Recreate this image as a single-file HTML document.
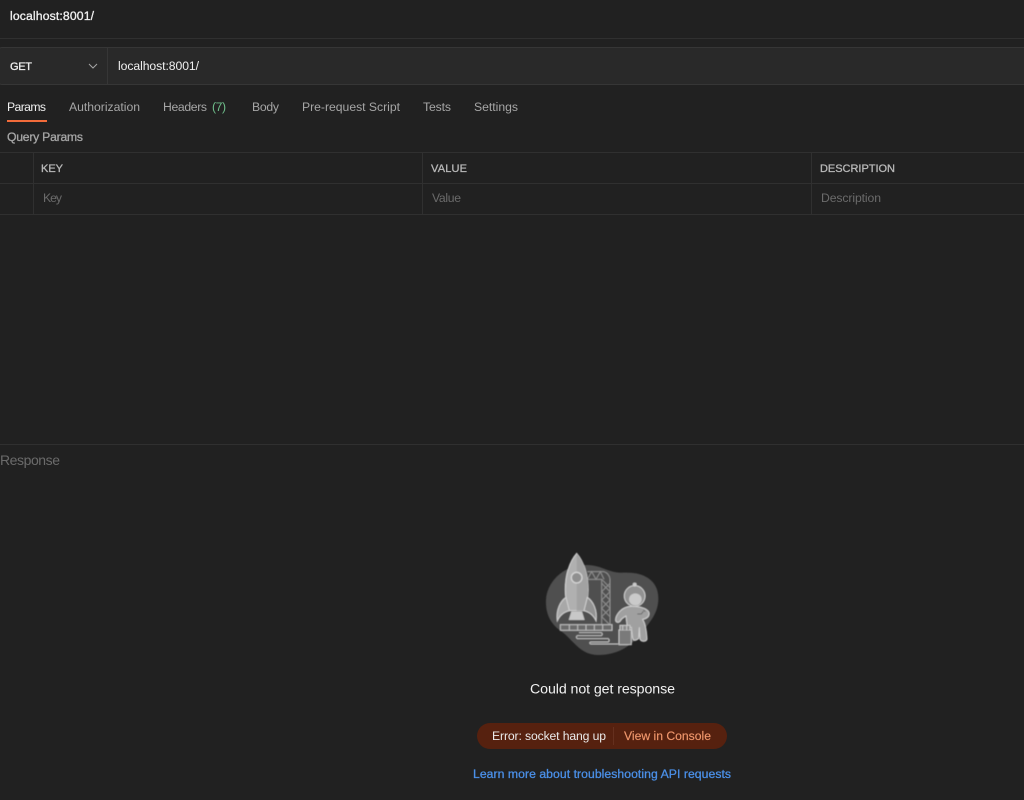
<!DOCTYPE html>
<html><head><meta charset="utf-8"><style>
html,body{margin:0;padding:0;background:#212121;width:1024px;height:800px;overflow:hidden}
svg{display:block}
text{font-family:"Liberation Sans",sans-serif;font-size:12.2px;fill:#a6a6a6}
.b{stroke-width:.3px;paint-order:stroke}
.u{font-size:11px}
</style></head><body>
<svg width="1024" height="800" viewBox="0 0 1024 800" xmlns="http://www.w3.org/2000/svg">
<defs><filter id="s" x="-5%" y="-5%" width="110%" height="110%"><feGaussianBlur stdDeviation="1.5"/></filter></defs>
<rect width="1024" height="800" fill="#212121"/>
<text x="10" y="20" textLength="84" class="b" style="fill:#f2f2f2;stroke:#f2f2f2">localhost:8001/</text>
<rect x="0" y="38" width="1024" height="1" fill="#303030"/>
<rect x="-2" y="47.5" width="1030" height="37" rx="4" fill="#292929" stroke="#363636"/>
<rect x="107" y="48" width="1" height="36" fill="#363636"/>
<text x="10" y="70" textLength="22" class="b u" style="fill:#f0f0f0;stroke:#f0f0f0">GET</text>
<path d="M89 64l4 4 4-4" fill="none" stroke="#a6a6a6" stroke-width="1"/>
<text x="118" y="70" textLength="81" style="fill:#f0f0f0">localhost:8001/</text>
<text x="7" y="111" textLength="39" style="fill:#f0f0f0">Params</text>
<text x="69" y="111" textLength="71">Authorization</text>
<text x="163" y="111" textLength="44">Headers</text>
<text x="212" y="111" textLength="14" style="fill:#6fbf8b">(7)</text>
<text x="252" y="111" textLength="27">Body</text>
<text x="302" y="111" textLength="98">Pre-request Script</text>
<text x="423" y="111" textLength="28">Tests</text>
<text x="474" y="111" textLength="44">Settings</text>
<rect x="7" y="120" width="40" height="2" fill="#f26b3a"/>
<text x="7" y="141" textLength="76" class="b" style="fill:#a6a6a6;stroke:#a6a6a6">Query Params</text>
<g fill="#303030">
<rect x="0" y="152" width="1024" height="1"/>
<rect x="0" y="183" width="1024" height="1"/>
<rect x="0" y="214" width="1024" height="1"/>
<rect x="33" y="152" width="1" height="62"/>
<rect x="422" y="152" width="1" height="62"/>
<rect x="811" y="152" width="1" height="62"/>
<rect x="0" y="444" width="1024" height="1"/>
</g>
<text x="41" y="172" textLength="22" class="b u" style="fill:#b8b8b8;stroke:#b8b8b8">KEY</text>
<text x="431" y="172" textLength="36" class="b u" style="fill:#b8b8b8;stroke:#b8b8b8">VALUE</text>
<text x="820" y="172" textLength="75" class="b u" style="fill:#b8b8b8;stroke:#b8b8b8">DESCRIPTION</text>
<text x="43" y="202" textLength="19" style="fill:#6b6b6b">Key</text>
<text x="432" y="202" textLength="29" style="fill:#6b6b6b">Value</text>
<text x="821" y="202" textLength="60" style="fill:#6b6b6b">Description</text>
<text x="0" y="465" textLength="60" style="fill:#6b6b6b;font-size:14px">Response</text>

<svg x="530" y="540" width="140" height="125" viewBox="0 0 420 375">
<g filter="url(#s)">
<path d="M48 180C50 130 95 75 170 75C215 75 235 100 280 98C340 95 385 120 385 175C385 215 365 240 345 265C320 300 280 345 205 345C150 345 130 300 95 275C65 255 46 225 48 180Z" fill="#505050"/>
<g fill="none" stroke="#8f8f8f" stroke-width="3">
<path d="M172 95H222Q238 100 240 118V258M172 118H215V258"/>
<path d="M172 118L185 95L198 118L211 95L222 118M215 130L240 155L215 180L240 205L215 230L240 255M240 130L215 155L240 180L215 205L240 230M215 118L240 143"/>
</g>
<path d="M140 40C118 65 106 105 106 150C106 175 111 195 118 212H162C169 195 174 175 174 150C174 105 162 65 140 40Z" fill="#b0b0b0" stroke="#d4d4d4" stroke-width="3"/>
<path d="M140 40C162 65 174 105 174 150C174 175 169 195 162 212H140Z" fill="#a2a2a2"/>
<circle cx="140" cy="113" r="16" fill="#8f8f8f" stroke="#d4d4d4" stroke-width="4"/>
<path d="M108 172C90 185 78 210 82 242C90 225 102 216 118 212Z" fill="#a8a8a8" stroke="#d0d0d0" stroke-width="3"/>
<path d="M172 172C190 185 202 210 198 242C190 225 178 216 162 212Z" fill="#939393" stroke="#d0d0d0" stroke-width="3"/>
<path d="M124 214H156L164 240H116Z" fill="#c8c8c8"/>
<g fill="none" stroke="#c0c0c0" stroke-width="3">
<rect x="91" y="254" width="155" height="17" fill="#6a6a6a"/>
<path d="M118 254V271M143 254V271M168 254V271M193 254V271M218 254V271"/>
<path d="M147 278H214Q220 282 214 287H142Q136 291 142 296H235Q240 301 235 306H182Q176 309 182 312H265"/>
</g>
<path d="M285 203C270 210 258 225 257 238C256 246 264 250 270 244C274 236 280 232 288 228L292 262H304L308 295C312 306 320 300 326 296L328 262L330 298C334 306 348 306 351 298C350 270 345 250 338 238C348 236 358 232 357 220C356 208 335 200 312 199C302 198 292 200 285 203Z" fill="#a0a0a0" stroke="#d0d0d0" stroke-width="3"/>
<circle cx="314" cy="168" r="31" fill="#929292" stroke="#d0d0d0" stroke-width="3"/>
<ellipse cx="316" cy="178" rx="19" ry="18" fill="#cacaca"/>
<circle cx="314" cy="134" r="6" fill="#cacaca"/>
<path d="M322 222l12 0 6-8M340 210l6 5" fill="none" stroke="#6a6a6a" stroke-width="3"/>
<rect x="267" y="270" width="37" height="44" fill="#7a7a7a" stroke="#c8c8c8" stroke-width="3"/>
<path d="M270 270V256H300V270M278 256V270M290 256V270" fill="#8a8a8a" stroke="#c8c8c8" stroke-width="3"/>
</g>
</svg>

<text x="530" y="693.5" textLength="145" style="fill:#f2f2f2;font-size:14.2px">Could not get response</text>
<rect x="477" y="723" width="250" height="26" rx="13" fill="#56210f"/>
<rect x="613" y="727" width="1" height="18" fill="#65301e"/>
<text x="492" y="740" textLength="114" style="fill:#eaeaea">Error: socket hang up</text>
<text x="624" y="740" textLength="87" class="b" style="fill:#f0976c;stroke:#f0976c;stroke-width:.15px">View in Console</text>
<text x="473" y="778" textLength="258" class="b" style="fill:#4a8fe7;stroke:#4a8fe7">Learn more about troubleshooting API requests</text>
</svg>
</body></html>
